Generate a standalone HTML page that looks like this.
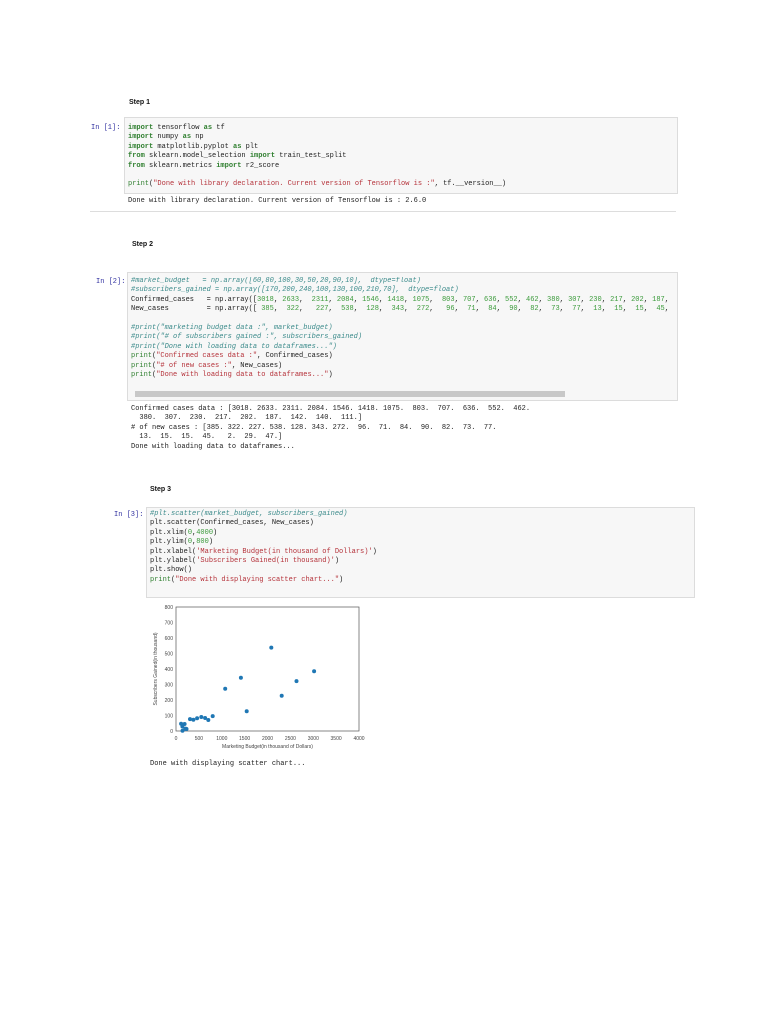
<!DOCTYPE html>
<html><head><meta charset="utf-8"><style>
body{margin:0;width:768px;height:1024px;background:#fff;position:relative;overflow:hidden;font-family:"Liberation Mono",monospace;}
.a{position:absolute;white-space:pre;font-size:7px;line-height:9.4px;color:#222;}
.st{position:absolute;font-family:"Liberation Sans",sans-serif;font-weight:bold;font-size:7px;color:#111;}
.box{position:absolute;background:#f7f7f7;border:1px solid #dcdcdc;overflow:hidden;}
.p{color:#2f7f2f;font-weight:bold}
.s{color:#b5323a}
.c{color:#3a8a8a;font-style:italic}
.n{color:#3a9a3a}
.pr{color:#2f7f2f}
.in{position:absolute;font-size:7px;color:#3030a0;white-space:pre}
</style></head><body>
<div class="st" style="left:129px;top:99px">Step 1</div>
<div class="in" style="left:91px;top:124px">In [1]:</div>
<div class="box" style="left:124px;top:117px;width:552px;height:75px"></div>
<div class="a" style="left:128px;top:124px"><span class="p">import</span> tensorflow <span class="p">as</span> tf
<span class="p">import</span> numpy <span class="p">as</span> np
<span class="p">import</span> matplotlib.pyplot <span class="p">as</span> plt
<span class="p">from</span> sklearn.model_selection <span class="p">import</span> train_test_split
<span class="p">from</span> sklearn.metrics <span class="p">import</span> r2_score

<span class="pr">print</span>(<span class="s">"Done with library declaration. Current version of Tensorflow is :"</span>, tf.__version__)</div>
<div class="a" style="left:128px;top:197px">Done with library declaration. Current version of Tensorflow is : 2.6.0</div>
<div style="position:absolute;left:90px;top:211px;width:586px;height:1px;background:#ddd"></div>

<div class="st" style="left:132px;top:241px">Step 2</div>
<div class="in" style="left:96px;top:278px">In [2]:</div>
<div class="box" style="left:127px;top:272px;width:549px;height:127px"></div>
<div class="a" style="left:131px;top:277px;width:540px;overflow:hidden"><span class="c">#market_budget   = np.array([60,80,100,30,50,20,90,10],  dtype=float)</span>
<span class="c">#subscribers_gained = np.array([170,200,240,100,130,100,210,70],  dtype=float)</span>
Confirmed_cases   = np.array([<span class="n">3018</span>, <span class="n">2633</span>,  <span class="n">2311</span>, <span class="n">2084</span>, <span class="n">1546</span>, <span class="n">1418</span>, <span class="n">1075</span>,  <span class="n">803</span>, <span class="n">707</span>, <span class="n">636</span>, <span class="n">552</span>, <span class="n">462</span>, <span class="n">380</span>, <span class="n">307</span>, <span class="n">230</span>, <span class="n">217</span>, <span class="n">202</span>, <span class="n">187</span>,
New_cases         = np.array([ <span class="n">385</span>,  <span class="n">322</span>,   <span class="n">227</span>,  <span class="n">538</span>,  <span class="n">128</span>,  <span class="n">343</span>,  <span class="n">272</span>,   <span class="n">96</span>,  <span class="n">71</span>,  <span class="n">84</span>,  <span class="n">90</span>,  <span class="n">82</span>,  <span class="n">73</span>,  <span class="n">77</span>,  <span class="n">13</span>,  <span class="n">15</span>,  <span class="n">15</span>,  <span class="n">45</span>,

<span class="c">#print("marketing budget data :", market_budget)</span>
<span class="c">#print("# of subscribers gained :", subscribers_gained)</span>
<span class="c">#print("Done with loading data to dataframes...")</span>
<span class="pr">print</span>(<span class="s">"Confirmed cases data :"</span>, Confirmed_cases)
<span class="pr">print</span>(<span class="s">"# of new cases :"</span>, New_cases)
<span class="pr">print</span>(<span class="s">"Done with loading data to dataframes..."</span>)</div>
<div style="position:absolute;left:135px;top:391px;width:430px;height:6px;background:#c8c8c8"></div>
<div class="a" style="left:131px;top:405px">Confirmed cases data : [3018. 2633. 2311. 2084. 1546. 1418. 1075.  803.  707.  636.  552.  462.
  380.  307.  230.  217.  202.  187.  142.  140.  111.]
# of new cases : [385. 322. 227. 538. 128. 343. 272.  96.  71.  84.  90.  82.  73.  77.
  13.  15.  15.  45.   2.  29.  47.]
Done with loading data to dataframes...</div>

<div class="st" style="left:150px;top:486px">Step 3</div>
<div class="in" style="left:114px;top:511px">In [3]:</div>
<div class="box" style="left:146px;top:507px;width:547px;height:89px"></div>
<div class="a" style="left:150px;top:510px"><span class="c">#plt.scatter(market_budget, subscribers_gained)</span>
plt.scatter(Confirmed_cases, New_cases)
plt.xlim(<span class="n">0</span>,<span class="n">4000</span>)
plt.ylim(<span class="n">0</span>,<span class="n">800</span>)
plt.xlabel(<span class="s">'Marketing Budget(in thousand of Dollars)'</span>)
plt.ylabel(<span class="s">'Subscribers Gained(in thousand)'</span>)
plt.show()
<span class="pr">print</span>(<span class="s">"Done with displaying scatter chart..."</span>)</div>

<svg style="position:absolute;left:0;top:0" width="768" height="1024" font-family="Liberation Sans, sans-serif" font-size="5" fill="#444">
<rect x="176" y="607" width="183" height="124" fill="none" stroke="#555" stroke-width="0.7"/>
<g text-anchor="end">
<text x="173" y="609">800</text><text x="173" y="624.5">700</text><text x="173" y="640">600</text><text x="173" y="655.5">500</text><text x="173" y="671">400</text><text x="173" y="686.5">300</text><text x="173" y="702">200</text><text x="173" y="717.5">100</text><text x="173" y="733">0</text>
</g>
<g text-anchor="middle">
<text x="176" y="740">0</text><text x="198.9" y="740">500</text><text x="221.8" y="740">1000</text><text x="244.6" y="740">1500</text><text x="267.5" y="740">2000</text><text x="290.4" y="740">2500</text><text x="313.3" y="740">3000</text><text x="336.1" y="740">3500</text><text x="359" y="740">4000</text>
<text x="267.5" y="748">Marketing Budget(in thousand of Dollars)</text>
<text transform="translate(157,669) rotate(-90)">Subscribers Gained(in thousand)</text>
</g>
<g fill="#1f77b4">
<circle cx="314.1" cy="671.3" r="2"/><circle cx="296.5" cy="681.1" r="2"/><circle cx="281.7" cy="695.8" r="2"/><circle cx="271.3" cy="647.6" r="2"/><circle cx="246.7" cy="711.2" r="2"/><circle cx="240.9" cy="677.8" r="2"/><circle cx="225.2" cy="688.8" r="2"/><circle cx="212.7" cy="716.1" r="2"/><circle cx="208.3" cy="720" r="2"/><circle cx="205.1" cy="718" r="2"/><circle cx="201.3" cy="717" r="2"/><circle cx="197.1" cy="718.3" r="2"/><circle cx="193.4" cy="719.7" r="2"/><circle cx="190" cy="719.1" r="2"/><circle cx="186.5" cy="729" r="2"/><circle cx="185.9" cy="728.7" r="2"/><circle cx="185.2" cy="728.7" r="2"/><circle cx="184.6" cy="724" r="2"/><circle cx="182.5" cy="730.7" r="2"/><circle cx="182.4" cy="726.5" r="2"/><circle cx="181.1" cy="723.7" r="2"/>
</g>
</svg>
<div class="a" style="left:150px;top:760px">Done with displaying scatter chart...</div>
</body></html>
